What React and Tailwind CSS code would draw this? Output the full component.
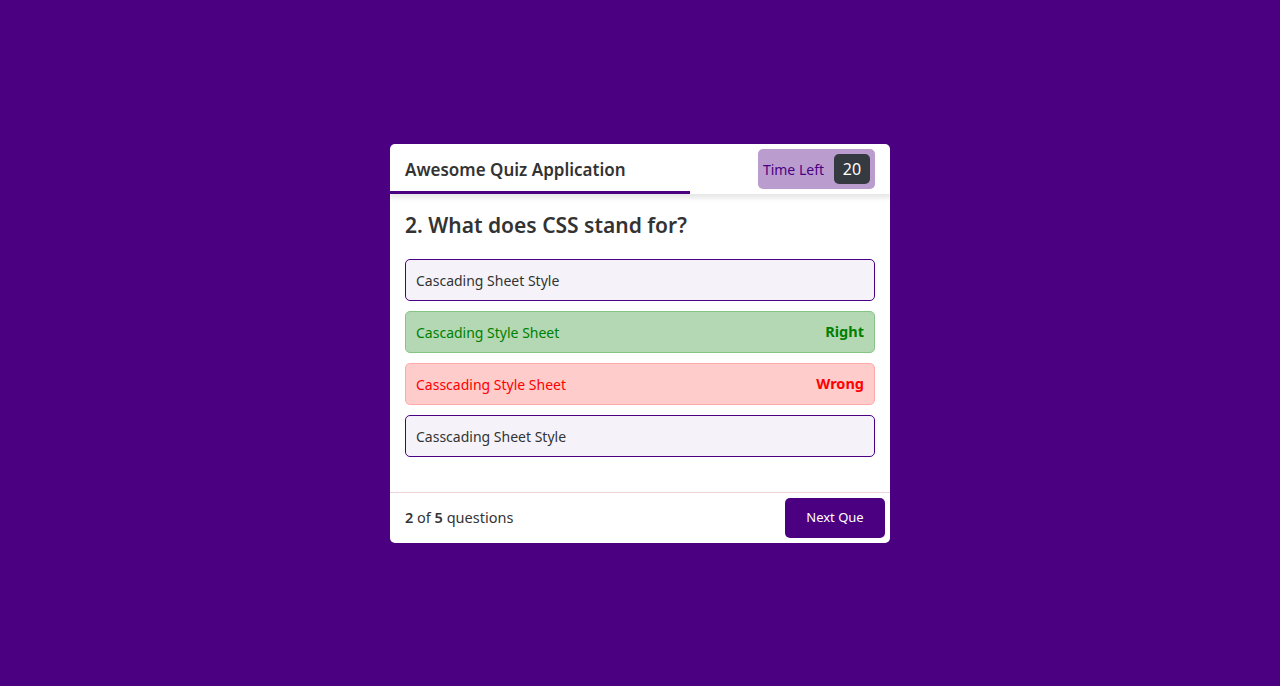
import React from 'react';

// Option row (inside this file)
const Option = ({ text, state }) => {
  let cls = 'bg-[#f5f3f9] border-[#4b0082] text-[#333333]';
  let tag = null;
  if (state === 'right') {
    cls = 'bg-[#b3d8b3] border-[#84c584] text-[#008000]';
    tag = 'Right';
  }
  if (state === 'wrong') {
    cls = 'bg-[#ffcccc] border-[#ffa8a8] text-[#ff0000]';
    tag = 'Wrong';
  }
  return (
    <div className={`h-[42px] border rounded-[5px] px-[10px] pt-[1px] flex items-center justify-between text-[14px] ${cls}`}>
      <span>{text}</span>
      {tag && <span className="font-bold text-[14.5px]">{tag}</span>}
    </div>
  );
};

function App() {
  const options = [
    { text: 'Cascading Sheet Style' },
    { text: 'Cascading Style Sheet', state: 'right' },
    { text: 'Casscading Style Sheet', state: 'wrong' },
    { text: 'Casscading Sheet Style' },
  ];

  return (
    <div
      className="min-h-screen bg-[#4b0082] flex items-center justify-center"
      style={{ fontFamily: '"Noto Sans", "Open Sans", sans-serif' }}
    >
      <div className="w-[500px] bg-white rounded-[5px] overflow-hidden">
        <header className="relative h-[50px] flex items-center justify-between pl-[15px] pr-[15px] shadow-[0_3px_5px_1px_rgba(0,0,0,0.1)]">
          <span className="mt-[3px] text-[17px] font-semibold text-[#333333]">Awesome Quiz Application</span>
          <div className="h-[40px] bg-[#bb9ccf] rounded-[5px] flex items-center pl-[5px] pr-[5px] gap-[10px]">
            <span className="text-[14px] text-[#4b0082] mt-[1px]">Time Left</span>
            <span className="h-[30px] w-[36px] rounded-[5px] bg-[#343a40] text-white text-[16px] flex items-center justify-center">20</span>
          </div>
          <div className="absolute left-0 bottom-0 h-[3px] w-[300px] bg-[#4b0082]" />
        </header>

        <section className="px-[15px] pt-[15px] pb-[35px]">
          <h2 className="text-[21px] font-semibold text-[#333333] leading-[33px] mb-[17px]">
            2. What does CSS stand for?
          </h2>
          <div className="flex flex-col gap-[10px]">
            {options.map((o, i) => (
              <Option key={i} text={o.text} state={o.state} />
            ))}
          </div>
        </section>

        <footer className="h-[51px] border-t border-[#efd5d5] flex items-center justify-between pl-[15px] pr-[5px]">
          <span className="text-[14.5px] text-[#333333] mt-[1px]">
            <b className="font-semibold">2</b> of <b className="font-semibold">5</b> questions
          </span>
          <button className="h-[40px] w-[100px] rounded-[5px] bg-[#4b0082] text-white text-[13px]">
            Next Que
          </button>
        </footer>
      </div>
    </div>
  );
}

export default App;
